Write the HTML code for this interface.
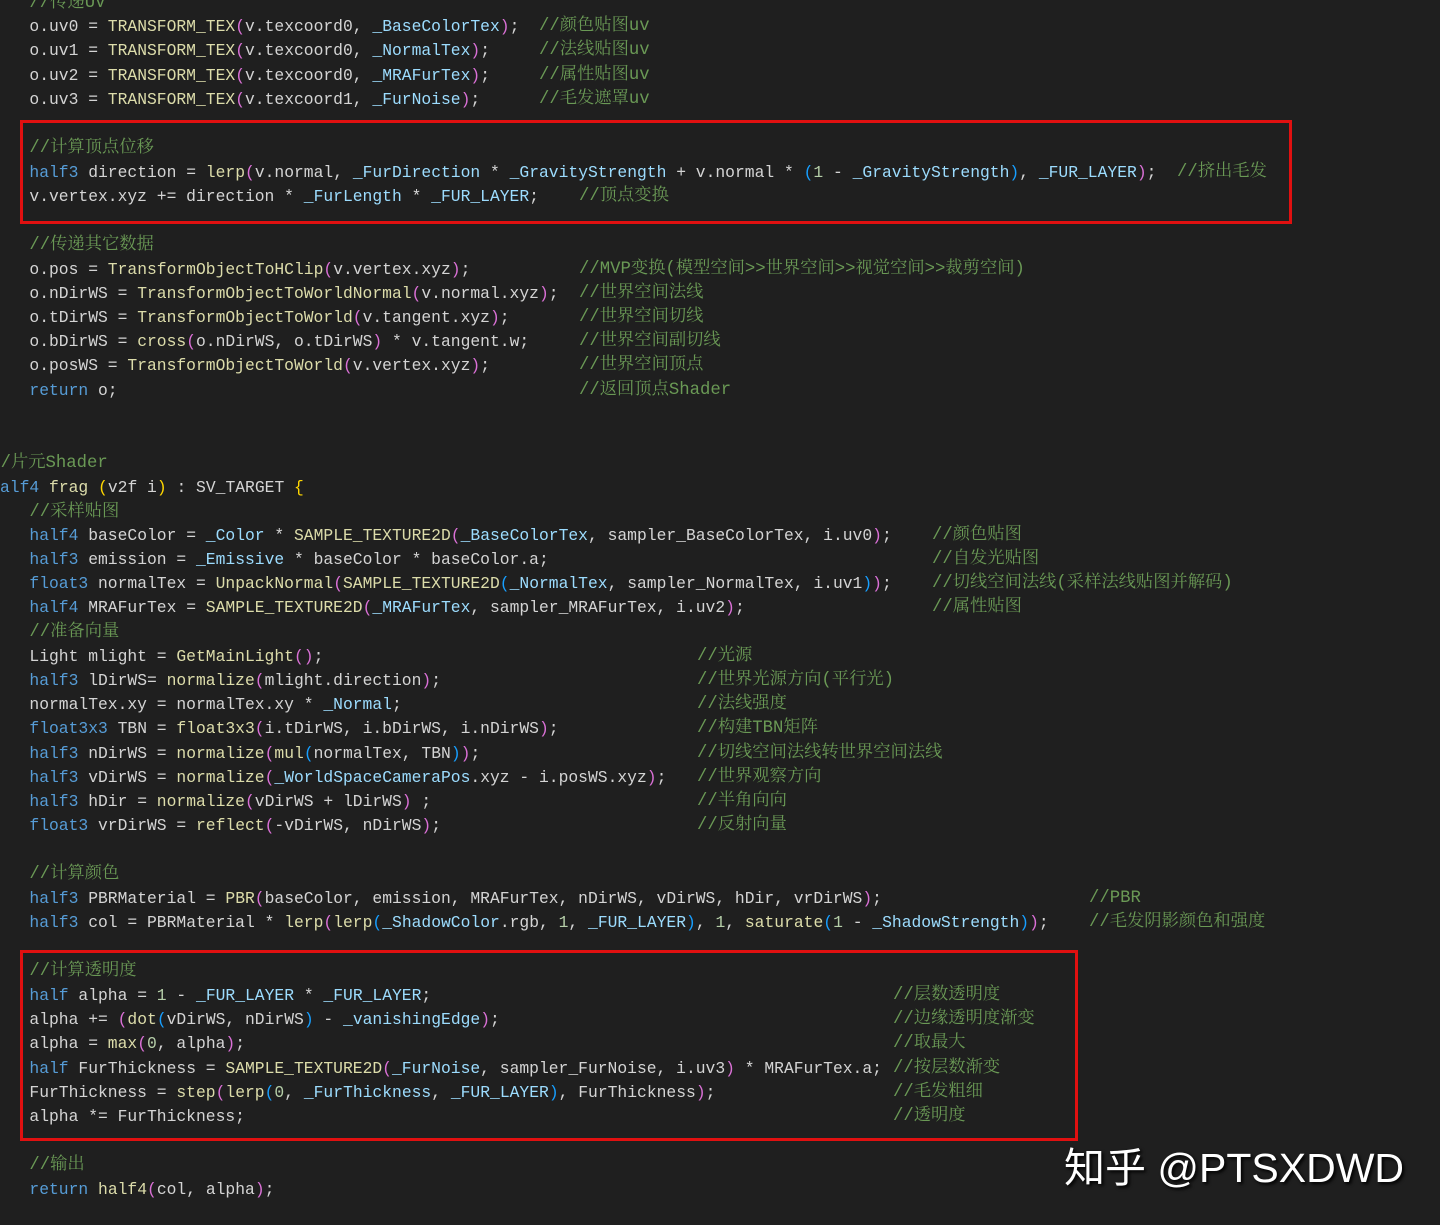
<!DOCTYPE html>
<html><head><meta charset="utf-8"><style>
html,body{margin:0;padding:0}
body{width:1440px;height:1223px;background:#1f1f1f;position:relative;overflow:hidden;font-family:"Liberation Mono",monospace;font-size:16.33px;color:#d4d4d4}
#w{position:absolute;left:0;top:2px;width:1440px;height:1223px}
.l{position:absolute;left:-9.8px;white-space:pre;height:24px;line-height:24px}
.c{color:#6a9955;font-family:"Liberation Mono","Noto Serif CJK SC",monospace}
.c,.cm{font-size:17.3px}
.cm{position:absolute;white-space:pre;color:#6a9955;font-family:"Liberation Mono","Noto Serif CJK SC",monospace;line-height:24px}
.k{color:#569cd6}.f{color:#dcdcaa}.v{color:#9cdcfe}.p{color:#da70d6}.b{color:#179fff}.y{color:#ffd700}.n{color:#b5cea8}
.box{position:absolute;border:3px solid #e01010;box-sizing:border-box}
.wm{position:absolute;left:1064px;top:1134px;font-family:"Liberation Sans","Noto Sans CJK SC",sans-serif;font-size:41px;color:#fff;text-shadow:2px 2px 3px #000;white-space:pre}
</style></head><body><div id="w">
<div class="l" style="top:-11px">    <span class="c">//传递UV</span></div>
<div class="l" style="top:13px">    o.uv0 = <span class="f">TRANSFORM_TEX</span><span class="p">(</span>v.texcoord0, <span class="v">_BaseColorTex</span><span class="p">)</span>;</div>
<div class="l" style="top:37px">    o.uv1 = <span class="f">TRANSFORM_TEX</span><span class="p">(</span>v.texcoord0, <span class="v">_NormalTex</span><span class="p">)</span>;</div>
<div class="l" style="top:62px">    o.uv2 = <span class="f">TRANSFORM_TEX</span><span class="p">(</span>v.texcoord0, <span class="v">_MRAFurTex</span><span class="p">)</span>;</div>
<div class="l" style="top:86px">    o.uv3 = <span class="f">TRANSFORM_TEX</span><span class="p">(</span>v.texcoord1, <span class="v">_FurNoise</span><span class="p">)</span>;</div>
<div class="cm" style="left:539px;top:13px">//颜色贴图uv</div>
<div class="cm" style="left:539px;top:37px">//法线贴图uv</div>
<div class="cm" style="left:539px;top:62px">//属性贴图uv</div>
<div class="cm" style="left:539px;top:86px">//毛发遮罩uv</div>

<div class="l" style="top:134px">    <span class="c">//计算顶点位移</span></div>
<div class="l" style="top:159px">    <span class="k">half3</span> direction = <span class="f">lerp</span><span class="p">(</span>v.normal, <span class="v">_FurDirection</span> * <span class="v">_GravityStrength</span> + v.normal * <span class="b">(</span><span class="n">1</span> - <span class="v">_GravityStrength</span><span class="b">)</span>, <span class="v">_FUR_LAYER</span><span class="p">)</span>;</div>
<div class="cm" style="left:1177px;top:159px">//挤出毛发</div>
<div class="l" style="top:183px">    v.vertex.xyz += direction * <span class="v">_FurLength</span> * <span class="v">_FUR_LAYER</span>;</div>
<div class="cm" style="left:579px;top:183px">//顶点变换</div>

<div class="l" style="top:231px">    <span class="c">//传递其它数据</span></div>
<div class="l" style="top:256px">    o.pos = <span class="f">TransformObjectToHClip</span><span class="p">(</span>v.vertex.xyz<span class="p">)</span>;</div>
<div class="l" style="top:280px">    o.nDirWS = <span class="f">TransformObjectToWorldNormal</span><span class="p">(</span>v.normal.xyz<span class="p">)</span>;</div>
<div class="l" style="top:304px">    o.tDirWS = <span class="f">TransformObjectToWorld</span><span class="p">(</span>v.tangent.xyz<span class="p">)</span>;</div>
<div class="l" style="top:328px">    o.bDirWS = <span class="f">cross</span><span class="p">(</span>o.nDirWS, o.tDirWS<span class="p">)</span> * v.tangent.w;</div>
<div class="l" style="top:352px">    o.posWS = <span class="f">TransformObjectToWorld</span><span class="p">(</span>v.vertex.xyz<span class="p">)</span>;</div>
<div class="l" style="top:377px">    <span class="k">return</span> o;</div>
<div class="cm" style="left:579px;top:256px">//MVP变换(模型空间&gt;&gt;世界空间&gt;&gt;视觉空间&gt;&gt;裁剪空间)</div>
<div class="cm" style="left:579px;top:280px">//世界空间法线</div>
<div class="cm" style="left:579px;top:304px">//世界空间切线</div>
<div class="cm" style="left:579px;top:328px">//世界空间副切线</div>
<div class="cm" style="left:579px;top:352px">//世界空间顶点</div>
<div class="cm" style="left:579px;top:377px">//返回顶点Shader</div>

<div class="l" style="top:449px"><span class="c">//片元Shader</span></div>
<div class="l" style="top:474px"><span class="k">half4</span> <span class="f">frag</span> <span class="y">(</span>v2f i<span class="y">)</span> : SV_TARGET <span class="y">{</span></div>
<div class="l" style="top:498px">    <span class="c">//采样贴图</span></div>
<div class="l" style="top:522px">    <span class="k">half4</span> baseColor = <span class="v">_Color</span> * <span class="f">SAMPLE_TEXTURE2D</span><span class="p">(</span><span class="v">_BaseColorTex</span>, sampler_BaseColorTex, i.uv0<span class="p">)</span>;</div>
<div class="l" style="top:546px">    <span class="k">half3</span> emission = <span class="v">_Emissive</span> * baseColor * baseColor.a;</div>
<div class="l" style="top:570px">    <span class="k">float3</span> normalTex = <span class="f">UnpackNormal</span><span class="p">(</span><span class="f">SAMPLE_TEXTURE2D</span><span class="b">(</span><span class="v">_NormalTex</span>, sampler_NormalTex, i.uv1<span class="b">)</span><span class="p">)</span>;</div>
<div class="l" style="top:594px">    <span class="k">half4</span> MRAFurTex = <span class="f">SAMPLE_TEXTURE2D</span><span class="p">(</span><span class="v">_MRAFurTex</span>, sampler_MRAFurTex, i.uv2<span class="p">)</span>;</div>
<div class="cm" style="left:932px;top:522px">//颜色贴图</div>
<div class="cm" style="left:932px;top:546px">//自发光贴图</div>
<div class="cm" style="left:932px;top:570px">//切线空间法线(采样法线贴图并解码)</div>
<div class="cm" style="left:932px;top:594px">//属性贴图</div>

<div class="l" style="top:618px">    <span class="c">//准备向量</span></div>
<div class="l" style="top:643px">    Light mlight = <span class="f">GetMainLight</span><span class="p">()</span>;</div>
<div class="l" style="top:667px">    <span class="k">half3</span> lDirWS= <span class="f">normalize</span><span class="p">(</span>mlight.direction<span class="p">)</span>;</div>
<div class="l" style="top:691px">    normalTex.xy = normalTex.xy * <span class="v">_Normal</span>;</div>
<div class="l" style="top:715px">    <span class="k">float3x3</span> TBN = <span class="f">float3x3</span><span class="p">(</span>i.tDirWS, i.bDirWS, i.nDirWS<span class="p">)</span>;</div>
<div class="l" style="top:740px">    <span class="k">half3</span> nDirWS = <span class="f">normalize</span><span class="p">(</span><span class="f">mul</span><span class="b">(</span>normalTex, TBN<span class="b">)</span><span class="p">)</span>;</div>
<div class="l" style="top:764px">    <span class="k">half3</span> vDirWS = <span class="f">normalize</span><span class="p">(</span><span class="v">_WorldSpaceCameraPos</span>.xyz - i.posWS.xyz<span class="p">)</span>;</div>
<div class="l" style="top:788px">    <span class="k">half3</span> hDir = <span class="f">normalize</span><span class="p">(</span>vDirWS + lDirWS<span class="p">)</span> ;</div>
<div class="l" style="top:812px">    <span class="k">float3</span> vrDirWS = <span class="f">reflect</span><span class="p">(</span>-vDirWS, nDirWS<span class="p">)</span>;</div>
<div class="cm" style="left:697px;top:643px">//光源</div>
<div class="cm" style="left:697px;top:667px">//世界光源方向(平行光)</div>
<div class="cm" style="left:697px;top:691px">//法线强度</div>
<div class="cm" style="left:697px;top:715px">//构建TBN矩阵</div>
<div class="cm" style="left:697px;top:740px">//切线空间法线转世界空间法线</div>
<div class="cm" style="left:697px;top:764px">//世界观察方向</div>
<div class="cm" style="left:697px;top:788px">//半角向向</div>
<div class="cm" style="left:697px;top:812px">//反射向量</div>

<div class="l" style="top:860px">    <span class="c">//计算颜色</span></div>
<div class="l" style="top:885px">    <span class="k">half3</span> PBRMaterial = <span class="f">PBR</span><span class="p">(</span>baseColor, emission, MRAFurTex, nDirWS, vDirWS, hDir, vrDirWS<span class="p">)</span>;</div>
<div class="l" style="top:909px">    <span class="k">half3</span> col = PBRMaterial * <span class="f">lerp</span><span class="p">(</span><span class="f">lerp</span><span class="b">(</span><span class="v">_ShadowColor</span>.rgb, <span class="n">1</span>, <span class="v">_FUR_LAYER</span><span class="b">)</span>, <span class="n">1</span>, <span class="f">saturate</span><span class="b">(</span><span class="n">1</span> - <span class="v">_ShadowStrength</span><span class="b">)</span><span class="p">)</span>;</div>
<div class="cm" style="left:1089px;top:885px">//PBR</div>
<div class="cm" style="left:1089px;top:909px">//毛发阴影颜色和强度</div>

<div class="l" style="top:957px">    <span class="c">//计算透明度</span></div>
<div class="l" style="top:982px">    <span class="k">half</span> alpha = <span class="n">1</span> - <span class="v">_FUR_LAYER</span> * <span class="v">_FUR_LAYER</span>;</div>
<div class="l" style="top:1006px">    alpha += <span class="p">(</span><span class="f">dot</span><span class="b">(</span>vDirWS, nDirWS<span class="b">)</span> - <span class="v">_vanishingEdge</span><span class="p">)</span>;</div>
<div class="l" style="top:1030px">    alpha = <span class="f">max</span><span class="p">(</span><span class="n">0</span>, alpha<span class="p">)</span>;</div>
<div class="l" style="top:1055px">    <span class="k">half</span> FurThickness = <span class="f">SAMPLE_TEXTURE2D</span><span class="p">(</span><span class="v">_FurNoise</span>, sampler_FurNoise, i.uv3<span class="p">)</span> * MRAFurTex.a;</div>
<div class="l" style="top:1079px">    FurThickness = <span class="f">step</span><span class="p">(</span><span class="f">lerp</span><span class="b">(</span><span class="n">0</span>, <span class="v">_FurThickness</span>, <span class="v">_FUR_LAYER</span><span class="b">)</span>, FurThickness<span class="p">)</span>;</div>
<div class="l" style="top:1103px">    alpha *= FurThickness;</div>
<div class="cm" style="left:893px;top:982px">//层数透明度</div>
<div class="cm" style="left:893px;top:1006px">//边缘透明度渐变</div>
<div class="cm" style="left:893px;top:1030px">//取最大</div>
<div class="cm" style="left:893px;top:1055px">//按层数渐变</div>
<div class="cm" style="left:893px;top:1079px">//毛发粗细</div>
<div class="cm" style="left:893px;top:1103px">//透明度</div>

<div class="l" style="top:1151px">    <span class="c">//输出</span></div>
<div class="l" style="top:1176px">    <span class="k">return</span> <span class="f">half4</span><span class="p">(</span>col, alpha<span class="p">)</span>;</div>
</div>
<div class="box" style="left:20px;top:120px;width:1272px;height:104px"></div>
<div class="box" style="left:20px;top:950px;width:1058px;height:191px"></div>
<div class="wm">知乎 @PTSXDWD</div>
</body></html>
